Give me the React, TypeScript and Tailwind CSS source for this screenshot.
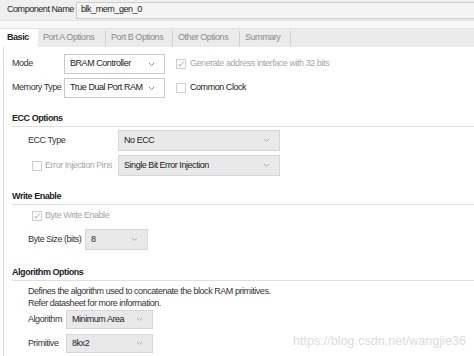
import type { ReactNode } from 'react';

function Chevron({ light }: { light?: boolean }) {
  return (
    <svg width="7" height="5" viewBox="0 0 7 5" className="shrink-0">
      <path d="M1 1 L3.5 3.5 L6 1" fill="none" stroke={light ? '#b0b0b0' : '#8a8a8a'} strokeWidth="1" />
    </svg>
  );
}

function Select({ value, className, gray }: { value: string; className: string; gray?: boolean }) {
  return (
    <div
      className={`flex items-center justify-between pl-[5px] pr-[9px] border ${
        gray ? 'bg-[#e9e9e9] border-[#d6d6d6]' : 'bg-white border-[#c9c9c9]'
      } ${className}`}
    >
      <span className="text-[#222] whitespace-nowrap">{value}</span>
      <Chevron light={gray} />
    </div>
  );
}

function Check({ checked }: { checked?: boolean }) {
  return (
    <div className="w-[10px] h-[10px] border border-[#cfcfcf] bg-white flex items-center justify-center shrink-0">
      {checked && (
        <svg width="8" height="8" viewBox="0 0 8 8">
          <path d="M1.5 4.2 L3.2 6 L6.8 1.5" fill="none" stroke="#bdbdbd" strokeWidth="1.1" />
        </svg>
      )}
    </div>
  );
}

function Section({ title, className, children }: { title: string; className: string; children: ReactNode }) {
  return (
    <div className={className}>
      <div className="h-[15px] border-b border-[#e0e0e0] font-bold text-[#222] leading-[12px]">{title}</div>
      <div className="pl-[16px] flex flex-col">{children}</div>
    </div>
  );
}

const tabs = [
  { name: 'Port A Options', w: 'w-[68px]' },
  { name: 'Port B Options', w: 'w-[67px]' },
  { name: 'Other Options', w: 'w-[67px]' },
  { name: 'Summary', w: 'w-[51px]' },
];

export default function App() {
  return (
    <div
      className="relative w-[474px] h-[356px] overflow-hidden bg-white text-[9px] tracking-[-0.45px] text-[#333]"
      style={{ fontFamily: '"Liberation Sans", Arial, sans-serif' }}
    >
      {/* component name */}
      <div className="h-[20px] flex items-center bg-[#efefef] pl-[7px]">
        <span className="w-[69px] shrink-0 text-[#222]">Component Name</span>
        <div className="flex-1 h-[17px] border border-r-0 border-[#cdcdcd] bg-[#f4f4f4] flex items-center pl-[4px] text-[#222]">
          blk_mem_gen_0
        </div>
      </div>
      <div className="h-[9px] bg-[#f8f8f8] border-y border-[#e2e2e2]" />

      {/* tabs */}
      <div className="h-[18px] flex bg-[#ebebeb]">
        <div className="w-[38px] bg-white flex items-center pl-[7px] font-bold text-[#222]">Basic</div>
        {tabs.map(t => (
          <div key={t.name} className={`${t.w} flex items-center pl-[5px] text-[#8c8c8c]`}>
            <span className="flex-1">{t.name}</span>
            <div className="w-px h-[15px] bg-[#cfcfcf]" />
          </div>
        ))}
      </div>

      {/* basic page */}
      <div className="ml-[3px] border-l border-[#d8d8d8] h-[309px] pl-[8px] pt-[7px] flex flex-col">
        <div className="flex items-center h-[20px]">
          <span className="w-[52px]">Mode</span>
          <Select value="BRAM Controller" className="w-[101px] h-[20px]" />
          <div className="ml-[11px] flex items-center gap-[4px] text-[#a6a6a6]">
            <Check checked />
            <span>Generate address interface with 32 bits</span>
          </div>
        </div>
        <div className="flex items-center h-[20px] mt-[4px]">
          <span className="w-[52px]">Memory Type</span>
          <Select value="True Dual Port RAM" className="w-[101px] h-[20px]" />
          <div className="ml-[11px] flex items-center gap-[4px] text-[#222]">
            <Check />
            <span>Common Clock</span>
          </div>
        </div>

        <Section title="ECC Options" className="mt-[14px]">
          <div className="flex items-center mt-[3px]">
            <span className="w-[90px]">ECC Type</span>
            <Select gray value="No ECC" className="w-[162px] h-[21px]" />
          </div>
          <div className="flex items-center mt-[4px]">
            <div className="w-[90px] flex items-center gap-[3px] pl-[4px] text-[#a6a6a6]">
              <Check />
              <span>Error Injection Pins</span>
            </div>
            <Select gray value="Single Bit Error Injection" className="w-[162px] h-[21px]" />
          </div>
        </Section>

        <Section title="Write Enable" className="mt-[14px]">
          <div className="flex items-center gap-[3px] pl-[4px] h-[12px] mt-[5px] text-[#a6a6a6]">
            <Check checked />
            <span>Byte Write Enable</span>
          </div>
          <div className="flex items-center mt-[7px]">
            <span className="w-[57px]">Byte Size (bits)</span>
            <Select gray value="8" className="w-[63px] h-[21px]" />
          </div>
        </Section>

        <Section title="Algorithm Options" className="mt-[16px]">
          <p className="mt-[4px] leading-[12px]">
            Defines the algorithm used to concatenate the block RAM primitives.
            <br />
            Refer datasheet for more information.
          </p>
          <div className="flex items-center mt-[1px]">
            <span className="w-[38px]">Algorithm</span>
            <Select gray value="Minimum Area" className="w-[87px] h-[19px]" />
          </div>
          <div className="flex items-center mt-[5px]">
            <span className="w-[38px]">Primitive</span>
            <Select gray value="8kx2" className="w-[87px] h-[19px]" />
          </div>
        </Section>
      </div>

      <div className="absolute left-[293px] top-[333px] text-[12.6px] tracking-normal text-[#dcdcdc] leading-[16px]">
        https://blog.csdn.net/wangjie36
      </div>
    </div>
  );
}
